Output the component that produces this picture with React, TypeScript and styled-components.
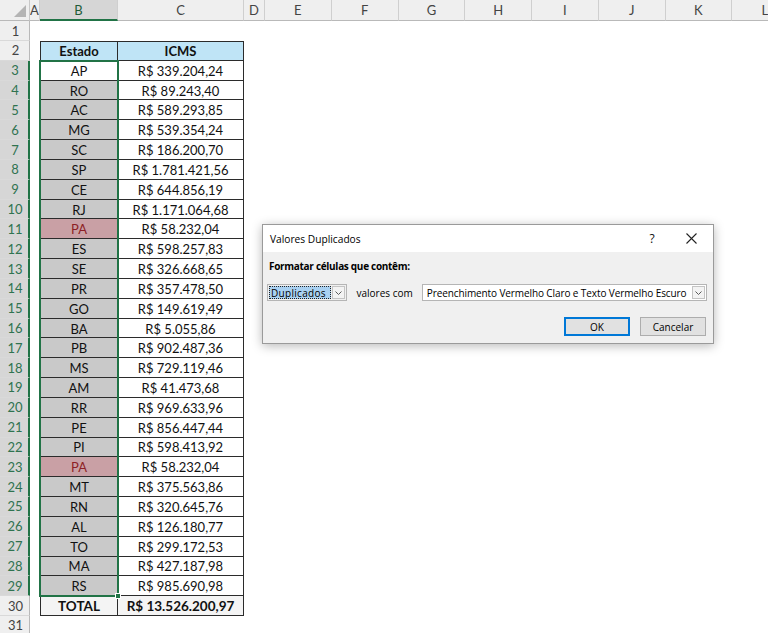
import React from 'react';
import styled, { createGlobalStyle, css } from 'styled-components';

const GlobalStyle = createGlobalStyle`
  html, body { margin: 0; padding: 0; background: #fff; overflow: hidden; }
  body { width: 768px; height: 633px; }
`;

const LINE = '#2b2b2b';
const GREEN = '#217346';

const Sheet = styled.div`
  position: relative;
  width: 768px;
  height: 633px;
  overflow: hidden;
  display: grid;
  grid-template-columns: 30px 10px 78px 126px 21px repeat(7, 66.75px) 66px;
  grid-template-rows: 21px 20px repeat(30, 19.83px);
  font-family: Lato, "Liberation Sans", sans-serif;
  font-size: 13px;
  color: #111;
  background: #fff;
`;

const Corner = styled.div`
  position: relative;
  background: #efefef;
  border-right: 1px solid #c8c8c8;
  border-bottom: 1px solid #b9b9b9;
  box-sizing: border-box;
  display: flex;
  align-items: flex-end;
  justify-content: flex-end;
  padding: 0 3px 3px 0;
`;

const ColHead = styled.div<{ $sel?: boolean }>`
  box-sizing: border-box;
  background: ${p => (p.$sel ? '#d6d6d6' : '#efefef')};
  border-right: 1px solid #cfcfcf;
  border-bottom: ${p => (p.$sel ? `2px solid ${GREEN}` : '1px solid #b9b9b9')};
  color: ${p => (p.$sel ? '#1e5c38' : '#444')};
  display: flex;
  align-items: center;
  justify-content: center;
  white-space: nowrap;
  overflow: visible;
  padding-top: ${p => (p.$sel ? '1px' : '0')};
`;

const RowHead = styled.div<{ $sel?: boolean }>`
  box-sizing: border-box;
  background: ${p => (p.$sel ? '#d6d6d6' : '#efefef')};
  border-bottom: 1px solid #d9d9d9;
  border-right: ${p => (p.$sel ? `2px solid ${GREEN}` : '1px solid #b9b9b9')};
  color: ${p => (p.$sel ? '#2f7350' : '#444')};
  display: flex;
  align-items: center;
  justify-content: center;
  padding-left: 2px;
`;

const Blank = styled.div``;

type Shade = 'none' | 'sel' | 'dup';

const TableCell = styled.div<{ $kind: 'head' | 'data' | 'total'; $first?: boolean; $shade?: Shade }>`
  position: relative;
  box-sizing: border-box;
  display: flex;
  align-items: center;
  justify-content: center;
  white-space: nowrap;
  color: #111;
  background: #fff;
  border-right: 1px solid ${LINE};
  border-bottom: 1px solid ${LINE};
  padding-top: 1px;
  ${p => p.$first && css`border-left: 1px solid ${LINE};`}
  ${p =>
    p.$kind === 'head' &&
    css`
      border-top: 1px solid ${LINE};
      background: #bfe4f6;
      font-weight: 700;
    `}
  ${p =>
    p.$kind === 'total' &&
    css`
      background: #f4f4f4;
      font-weight: 700;
      font-size: 13.5px;
    `}
  ${p => p.$shade === 'sel' && css`background: #c9c9c9;`}
  ${p => p.$shade === 'dup' && css`background: #c9a0a5; color: #8e1f26;`}
`;

const Selection = styled.div`
  position: absolute;
  left: -2px;
  top: -1px;
  width: 80px;
  height: 537px;
  box-sizing: border-box;
  border: 2px solid ${GREEN};
  z-index: 3;
  pointer-events: none;
`;

const FillHandle = styled.div`
  position: absolute;
  right: -4px;
  bottom: -4px;
  width: 6px;
  height: 6px;
  box-sizing: border-box;
  background: ${GREEN};
  border: 1px solid #fff;
`;

/* Dialog */
const Dialog = styled.div`
  position: absolute;
  left: 262px;
  top: 224px;
  width: 452px;
  height: 120px;
  box-sizing: border-box;
  border: 1px solid #9a9a9a;
  background: #f0f0f0;
  box-shadow: 0 2px 10px rgba(0, 0, 0, 0.28);
  display: flex;
  flex-direction: column;
  font-family: "Open Sans", "Noto Sans", sans-serif;
  font-size: 10px;
  color: #000;
  z-index: 10;
`;

const TitleBar = styled.div`
  height: 27px;
  background: #fff;
  display: flex;
  align-items: center;
  padding-left: 7px;
`;

const TitleText = styled.div`
  flex: 1;
  font-size: 10.2px;
`;

const TitleButton = styled.div<{ $w: number }>`
  width: ${p => p.$w}px;
  height: 27px;
  display: flex;
  align-items: center;
  justify-content: center;
  font-size: 12px;
  color: #111;
`;

const Body = styled.div`
  flex: 1;
  display: flex;
  flex-direction: column;
  padding: 6px 6px 0 4px;
`;

const Label = styled.div`
  font-weight: 700;
  letter-spacing: -0.3px;
  padding-left: 2px;
  height: 16px;
  line-height: 16px;
`;

const ControlRow = styled.div`
  display: flex;
  align-items: center;
  margin-top: 10px;
  height: 17px;
`;

const Combo = styled.div<{ $w: number; $white?: boolean }>`
  width: ${p => p.$w}px;
  height: 17px;
  box-sizing: border-box;
  border: 1px solid #b5b5b5;
  background: ${p => (p.$white ? '#fff' : '#f0f0f0')};
  display: flex;
  align-items: stretch;
  padding: 1px;
`;

const ComboValue = styled.div<{ $focus?: boolean }>`
  flex: 1;
  display: flex;
  align-items: center;
  padding-left: 3px;
  white-space: nowrap;
  overflow: hidden;
  letter-spacing: -0.1px;
  ${p =>
    p.$focus &&
    css`
      background: #a9d1f2;
      outline: 1px dotted #222;
      outline-offset: -1px;
      margin-right: 1px;
      padding-left: 2px;
      letter-spacing: 0.3px;
    `}
`;

const ComboButton = styled.div`
  width: 13px;
  box-sizing: border-box;
  border: 1px solid #c4c4c4;
  background: #f3f3f3;
  display: flex;
  align-items: center;
  justify-content: center;
`;

const MidText = styled.div`
  margin: 0 9px 0 10px;
  white-space: nowrap;
`;

const ButtonRow = styled.div`
  display: flex;
  justify-content: flex-end;
  gap: 10px;
  margin-top: 16px;
  padding-right: 1px;
`;

const DlgButton = styled.div<{ $default?: boolean }>`
  width: 66px;
  height: 19px;
  box-sizing: border-box;
  background: #e1e1e1;
  border: ${p => (p.$default ? '2px solid #0078d7' : '1px solid #adadad')};
  display: flex;
  align-items: center;
  justify-content: center;
`;

const Chevron = () => (
  <svg width="7" height="4" viewBox="0 0 7 4">
    <path d="M0.5 0.5 L3.5 3.5 L6.5 0.5" fill="none" stroke="#5a5a5a" strokeWidth="1" />
  </svg>
);

const CloseIcon = () => (
  <svg width="11" height="11" viewBox="0 0 11 11">
    <path d="M0.5 0.5 L10.5 10.5 M10.5 0.5 L0.5 10.5" stroke="#222" strokeWidth="1.1" />
  </svg>
);

const CornerTriangle = () => (
  <svg width="12" height="12" viewBox="0 0 12 12">
    <polygon points="12,0 12,12 0,12" fill="#b4b4b4" />
  </svg>
);

const DATA: [string, string][] = [
  ['AP', 'R$ 339.204,24'],
  ['RO', 'R$ 89.243,40'],
  ['AC', 'R$ 589.293,85'],
  ['MG', 'R$ 539.354,24'],
  ['SC', 'R$ 186.200,70'],
  ['SP', 'R$ 1.781.421,56'],
  ['CE', 'R$ 644.856,19'],
  ['RJ', 'R$ 1.171.064,68'],
  ['PA', 'R$ 58.232,04'],
  ['ES', 'R$ 598.257,83'],
  ['SE', 'R$ 326.668,65'],
  ['PR', 'R$ 357.478,50'],
  ['GO', 'R$ 149.619,49'],
  ['BA', 'R$ 5.055,86'],
  ['PB', 'R$ 902.487,36'],
  ['MS', 'R$ 729.119,46'],
  ['AM', 'R$ 41.473,68'],
  ['RR', 'R$ 969.633,96'],
  ['PE', 'R$ 856.447,44'],
  ['PI', 'R$ 598.413,92'],
  ['PA', 'R$ 58.232,04'],
  ['MT', 'R$ 375.563,86'],
  ['RN', 'R$ 320.645,76'],
  ['AL', 'R$ 126.180,77'],
  ['TO', 'R$ 299.172,53'],
  ['MA', 'R$ 427.187,98'],
  ['RS', 'R$ 985.690,98'],
];

const LETTERS = ['A', 'B', 'C', 'D', 'E', 'F', 'G', 'H', 'I', 'J', 'K', 'L'];
const TAIL = ['D', 'E', 'F', 'G', 'H', 'I', 'J', 'K', 'L'];

function renderRow(r: number) {
  const sel = r >= 3 && r <= 29;
  const cells: React.ReactNode[] = [];
  cells.push(
    <RowHead key={`h${r}`} $sel={sel}>
      {r}
    </RowHead>
  );
  cells.push(<Blank key={`a${r}`} />);
  if (r === 2) {
    cells.push(
      <TableCell key={`b${r}`} $kind="head" $first>
        Estado
      </TableCell>
    );
    cells.push(
      <TableCell key={`c${r}`} $kind="head">
        ICMS
      </TableCell>
    );
  } else if (sel) {
    const [uf, val] = DATA[r - 3];
    const dup = uf === 'PA';
    const shade: Shade = dup ? 'dup' : r === 3 ? 'none' : 'sel';
    cells.push(
      <TableCell key={`b${r}`} $kind="data" $first $shade={shade}>
        {uf}
        {r === 3 && (
          <Selection>
            <FillHandle />
          </Selection>
        )}
      </TableCell>
    );
    cells.push(
      <TableCell key={`c${r}`} $kind="data">
        {val}
      </TableCell>
    );
  } else if (r === 30) {
    cells.push(
      <TableCell key={`b${r}`} $kind="total" $first>
        TOTAL
      </TableCell>
    );
    cells.push(
      <TableCell key={`c${r}`} $kind="total">
        R$ 13.526.200,97
      </TableCell>
    );
  } else {
    cells.push(<Blank key={`b${r}`} />);
    cells.push(<Blank key={`c${r}`} />);
  }
  TAIL.forEach(l => cells.push(<Blank key={`${l}${r}`} />));
  return cells;
}

export default function App() {
  const rows: React.ReactNode[] = [];
  for (let r = 1; r <= 31; r++) rows.push(...renderRow(r));
  return (
    <>
      <GlobalStyle />
      <Sheet>
        <Corner>
          <CornerTriangle />
        </Corner>
        {LETTERS.map(l => (
          <ColHead key={l} $sel={l === 'B'}>
            {l}
          </ColHead>
        ))}
        {rows}
        <Dialog>
          <TitleBar>
            <TitleText>Valores Duplicados</TitleText>
            <TitleButton $w={34}>?</TitleButton>
            <TitleButton $w={44}>
              <CloseIcon />
            </TitleButton>
          </TitleBar>
          <Body>
            <Label>Formatar células que contêm:</Label>
            <ControlRow>
              <Combo $w={80}>
                <ComboValue $focus>Duplicados</ComboValue>
                <ComboButton>
                  <Chevron />
                </ComboButton>
              </Combo>
              <MidText>valores com</MidText>
              <Combo $w={287} $white>
                <ComboValue>Preenchimento Vermelho Claro e Texto Vermelho Escuro</ComboValue>
                <ComboButton>
                  <Chevron />
                </ComboButton>
              </Combo>
            </ControlRow>
            <ButtonRow>
              <DlgButton $default>OK</DlgButton>
              <DlgButton>Cancelar</DlgButton>
            </ButtonRow>
          </Body>
        </Dialog>
      </Sheet>
    </>
  );
}
